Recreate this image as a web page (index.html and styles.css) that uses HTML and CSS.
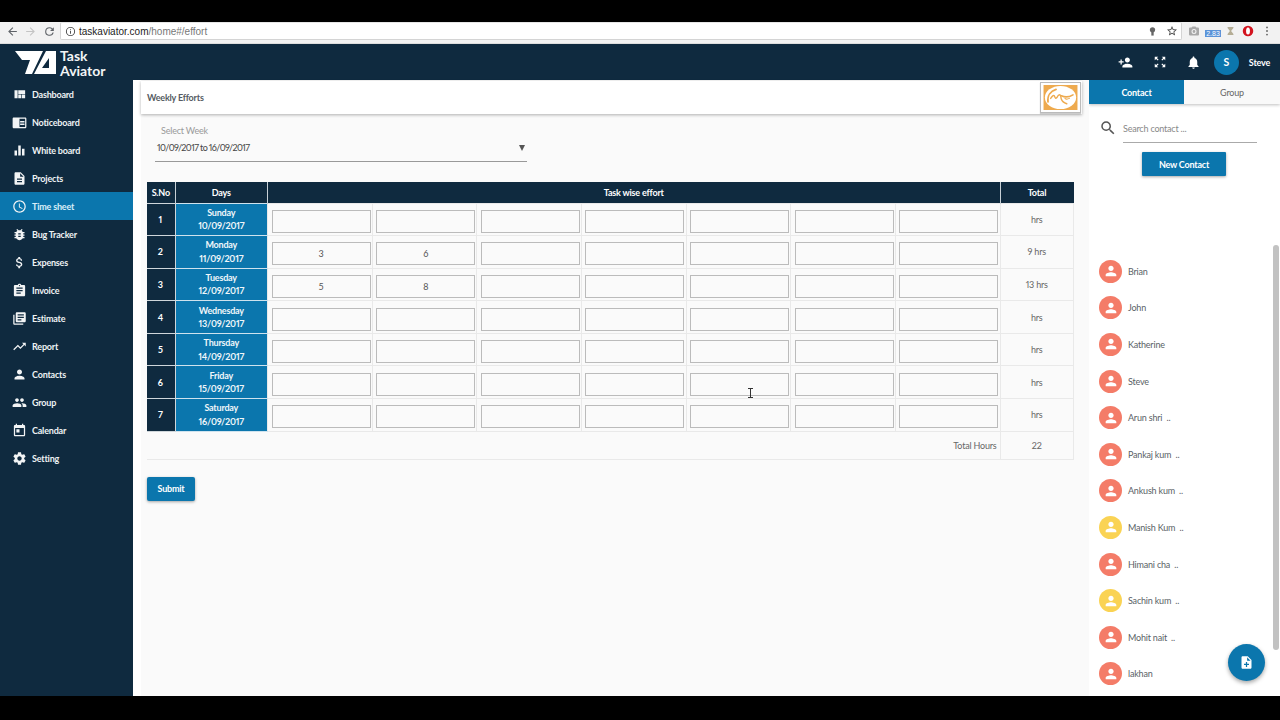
FILE: index.html
```html
<!DOCTYPE html>
<html lang="en">
<head>
<meta charset="utf-8">
<title>Task Aviator</title>
<link rel="stylesheet" href="styles.css">
</head>
<body>
<svg class="defs" aria-hidden="true">
<symbol id="i-quilt" viewBox="0 0 24 24"><path d="M10 18h5v-6h-5v6zm-6 0h5V5H4v13zm12 0h5v-6h-5v6zM10 5v6h11V5H10z"/></symbol>
<symbol id="i-reader" viewBox="0 0 24 24"><path d="M13 12h7v1.5h-7zm0-2.5h7V11h-7zm0 5h7V16h-7zM21 4H3c-1.1 0-2 .9-2 2v13c0 1.1.9 2 2 2h18c1.1 0 2-.9 2-2V6c0-1.1-.9-2-2-2zm0 15h-9V6h9v13z"/></symbol>
<symbol id="i-bars" viewBox="0 0 24 24"><path d="M10 20h4V4h-4v16zm-6 0h4v-8H4v8zM16 9v11h4V9h-4z"/></symbol>
<symbol id="i-desc" viewBox="0 0 24 24"><path d="M14 2H6c-1.1 0-1.99.9-1.99 2L4 20c0 1.1.89 2 1.99 2H18c1.1 0 2-.9 2-2V8l-6-6zm2 16H8v-2h8v2zm0-4H8v-2h8v2zm-3-5V3.5L18.5 9H13z"/></symbol>
<symbol id="i-time" viewBox="0 0 24 24"><path d="M11.99 2C6.47 2 2 6.48 2 12s4.47 10 9.99 10C17.52 22 22 17.52 22 12S17.52 2 11.99 2zM12 20c-4.42 0-8-3.58-8-8s3.58-8 8-8 8 3.58 8 8-3.58 8-8 8zm.5-13H11v6l5.25 3.15.75-1.23-4.5-2.67z"/></symbol>
<symbol id="i-bug" viewBox="0 0 24 24"><path d="M20 8h-2.81c-.45-.78-1.07-1.45-1.82-1.96L17 4.41 15.59 3l-2.17 2.17C12.96 5.06 12.49 5 12 5c-.49 0-.96.06-1.41.17L8.41 3 7 4.41l1.62 1.63C7.88 6.55 7.26 7.22 6.81 8H4v2h2.09c-.05.33-.09.66-.09 1v1H4v2h2v1c0 .34.04.67.09 1H4v2h2.81c1.04 1.79 2.97 3 5.19 3s4.15-1.21 5.19-3H20v-2h-2.09c.05-.33.09-.66.09-1v-1h2v-2h-2v-1c0-.34-.04-.67-.09-1H20V8zm-6 8h-4v-2h4v2zm0-4h-4v-2h4v2z"/></symbol>
<symbol id="i-money" viewBox="0 0 24 24"><path d="M11.8 10.9c-2.27-.59-3-1.2-3-2.15 0-1.09 1.01-1.85 2.7-1.85 1.78 0 2.44.85 2.5 2.1h2.21c-.07-1.72-1.12-3.3-3.21-3.81V3h-3v2.16c-1.94.42-3.5 1.68-3.5 3.61 0 2.31 1.91 3.46 4.7 4.13 2.5.6 3 1.48 3 2.41 0 .69-.49 1.79-2.7 1.79-2.06 0-2.87-.92-2.98-2.1h-2.2c.12 2.19 1.76 3.42 3.68 3.83V21h3v-2.15c1.95-.37 3.5-1.5 3.5-3.55 0-2.84-2.43-3.81-4.7-4.4z"/></symbol>
<symbol id="i-assign" viewBox="0 0 24 24"><path d="M19 3h-4.18C14.4 1.84 13.3 1 12 1c-1.3 0-2.4.84-2.82 2H5c-1.1 0-2 .9-2 2v14c0 1.1.9 2 2 2h14c1.1 0 2-.9 2-2V5c0-1.1-.9-2-2-2zm-7 0c.55 0 1 .45 1 1s-.45 1-1 1-1-.45-1-1 .45-1 1-1zm2 14H7v-2h7v2zm3-4H7v-2h10v2zm0-4H7V7h10v2z"/></symbol>
<symbol id="i-books" viewBox="0 0 24 24"><path d="M4 6H2v14c0 1.1.9 2 2 2h14v-2H4V6zm16-4H8c-1.1 0-2 .9-2 2v12c0 1.1.9 2 2 2h12c1.1 0 2-.9 2-2V4c0-1.1-.9-2-2-2zm-1 9H9V9h10v2zm-4 4H9v-2h6v2zm4-8H9V5h10v2z"/></symbol>
<symbol id="i-trend" viewBox="0 0 24 24"><path d="M16 6l2.29 2.29-4.88 4.88-4-4L2 16.59 3.41 18l6-6 4 4 6.3-6.29L22 12V6z"/></symbol>
<symbol id="i-person" viewBox="0 0 24 24"><path d="M12 12c2.21 0 4-1.79 4-4s-1.79-4-4-4-4 1.79-4 4 1.79 4 4 4zm0 2c-2.67 0-8 1.34-8 4v2h16v-2c0-2.66-5.33-4-8-4z"/></symbol>
<symbol id="i-group" viewBox="0 0 24 24"><path d="M16 11c1.66 0 2.99-1.34 2.99-3S17.66 5 16 5c-1.66 0-3 1.34-3 3s1.34 3 3 3zm-8 0c1.66 0 2.99-1.34 2.99-3S9.66 5 8 5C6.34 5 5 6.34 5 8s1.34 3 3 3zm0 2c-2.33 0-7 1.17-7 3.5V19h14v-2.5c0-2.33-4.67-3.5-7-3.5zm8 0c-.29 0-.62.02-.97.05 1.16.84 1.97 1.97 1.97 3.45V19h6v-2.5c0-2.33-4.67-3.5-7-3.5z"/></symbol>
<symbol id="i-today" viewBox="0 0 24 24"><path d="M19 3h-1V1h-2v2H8V1H6v2H5c-1.11 0-1.99.9-1.99 2L3 19c0 1.1.89 2 2 2h14c1.1 0 2-.9 2-2V5c0-1.1-.9-2-2-2zm0 16H5V8h14v11zM7 10h5v5H7z"/></symbol>
<symbol id="i-gear" viewBox="0 0 24 24"><path d="M19.43 12.98c.04-.32.07-.64.07-.98s-.03-.66-.07-.98l2.11-1.65c.19-.15.24-.42.12-.64l-2-3.46c-.12-.22-.39-.3-.61-.22l-2.49 1c-.52-.4-1.08-.73-1.69-.98l-.38-2.65C14.46 2.18 14.25 2 14 2h-4c-.25 0-.46.18-.49.42l-.38 2.65c-.61.25-1.17.59-1.69.98l-2.49-1c-.23-.09-.49 0-.61.22l-2 3.46c-.13.22-.07.49.12.64l2.11 1.65c-.04.32-.07.65-.07.98s.03.66.07.98l-2.11 1.65c-.19.15-.24.42-.12.64l2 3.46c.12.22.39.3.61.22l2.49-1c.52.4 1.08.73 1.69.98l.38 2.65c.03.24.24.42.49.42h4c.25 0 .46-.18.49-.42l.38-2.65c.61-.25 1.17-.59 1.69-.98l2.49 1c.23.09.49 0 .61-.22l2-3.46c.12-.22.07-.49-.12-.64l-2.11-1.65zM12 15.5c-1.93 0-3.5-1.57-3.5-3.5s1.57-3.5 3.5-3.5 3.5 1.57 3.5 3.5-1.57 3.5-3.5 3.5z"/></symbol>
<symbol id="i-padd" viewBox="0 0 24 24"><path d="M15 12c2.21 0 4-1.79 4-4s-1.79-4-4-4-4 1.79-4 4 1.79 4 4 4zm-9-2V7H4v3H1v2h3v3h2v-3h3v-2H6zm9 4c-2.67 0-8 1.34-8 4v2h16v-2c0-2.66-5.33-4-8-4z"/></symbol>
<symbol id="i-map" viewBox="0 0 24 24"><path d="M15 3l2.3 2.3-2.89 2.87 1.42 1.42L18.7 6.7 21 9V3zM3 9l2.3-2.3 2.87 2.89 1.42-1.42L6.7 5.3 9 3H3zm6 12l-2.3-2.3 2.89-2.87-1.42-1.42L5.3 17.3 3 15v6zm12-6l-2.3 2.3-2.87-2.89-1.42 1.42 2.89 2.87L15 21h6z"/></symbol>
<symbol id="i-bell" viewBox="0 0 24 24"><path d="M12 22c1.1 0 2-.9 2-2h-4c0 1.1.89 2 2 2zm6-6v-5c0-3.07-1.64-5.64-4.5-6.32V4c0-.83-.67-1.5-1.5-1.5s-1.5.67-1.5 1.5v.68C7.63 5.36 6 7.92 6 11v5l-2 2v1h16v-1l-2-2z"/></symbol>
<symbol id="i-search" viewBox="0 0 24 24"><path d="M15.5 14h-.79l-.28-.27A6.47 6.47 0 0 0 16 9.5 6.5 6.5 0 1 0 9.5 16c1.61 0 3.09-.59 4.23-1.57l.27.28v.79l5 4.99L20.49 19l-4.99-5zm-6 0C7.01 14 5 11.99 5 9.5S7.01 5 9.5 5 14 7.01 14 9.5 11.99 14 9.5 14z"/></symbol>
<symbol id="i-note" viewBox="0 0 24 24"><path d="M14 2H6c-1.1 0-1.99.9-1.99 2L4 20c0 1.1.89 2 1.99 2H18c1.1 0 2-.9 2-2V8l-6-6zm2 14h-3v3h-2v-3H8v-2h3v-3h2v3h3v2zm-3-7V3.5L18.5 9H13z"/></symbol>
</svg>

<div class="bar-black"></div>
<div class="chrome">
  <svg class="c-ico" viewBox="0 0 24 24"><path d="M20 11H7.83l5.59-5.59L12 4l-8 8 8 8 1.41-1.41L7.83 13H20v-2z"/></svg>
  <svg class="c-ico dim" viewBox="0 0 24 24"><path d="M12 4l-1.41 1.41L16.17 11H4v2h12.17l-5.58 5.59L12 20l8-8z"/></svg>
  <svg class="c-ico reload" viewBox="0 0 24 24"><path d="M17.65 6.35A7.96 7.96 0 0 0 12 4a8 8 0 1 0 7.73 10h-2.08A6 6 0 1 1 12 6c1.66 0 3.14.69 4.22 1.78L13 11h7V4l-2.35 2.35z"/></svg>
  <div class="omni">
    <svg class="omni-info" viewBox="0 0 24 24"><path d="M11 7h2v2h-2zm0 4h2v6h-2zm1-9a10 10 0 1 0 0 20 10 10 0 0 0 0-20zm0 18a8 8 0 1 1 0-16 8 8 0 0 1 0 16z"/></svg>
    <span class="url">taskaviator.com<span class="url-path">/home#/effort</span></span>
    <svg class="omni-key" viewBox="0 0 12 14"><circle cx="6" cy="4" r="4.500"/><rect x="4" y="5" width="4" height="9"/></svg>
    <svg class="omni-star" viewBox="0 0 24 24"><path d="M22 9.240l-7.190-.620L12 2 9.190 8.630 2 9.240l5.460 4.730L5.820 21 12 17.270 18.180 21l-1.630-7.030L22 9.240zM12 15.400l-3.760 2.270 1-4.280-3.320-2.880 4.380-.380L12 6.100l1.710 4.040 4.380.380-3.320 2.880 1 4.280L12 15.400z"/></svg>
  </div>
  <div class="ext">
    <svg class="ext-cam" viewBox="0 0 24 24"><path d="M9 3L7.200 5H4a2 2 0 0 0-2 2v12a2 2 0 0 0 2 2h16a2 2 0 0 0 2-2V7a2 2 0 0 0-2-2h-3.200L15 3H9zm3 15a5 5 0 1 1 0-10 5 5 0 0 1 0 10zm0-2.200a2.800 2.800 0 1 0 0-5.600 2.800 2.800 0 0 0 0 5.600z"/></svg>
    <span class="ext-badge">2.83</span>
    <svg class="ext-glass" viewBox="0 0 12 16"><path d="M1 1h10v2L7 8l4 5v2H1v-2l4-5-4-5z"/></svg>
    <svg class="ext-opera" viewBox="0 0 16 16"><circle cx="8" cy="8" r="7"/><ellipse class="op-hole" cx="8" cy="8" rx="2.600" ry="4.800"/></svg>
    <svg class="ext-dots" viewBox="0 0 4 14"><circle cx="2" cy="2" r="1.300"/><circle cx="2" cy="7" r="1.300"/><circle cx="2" cy="12" r="1.300"/></svg>
  </div>
</div>

<header class="topbar">
  <div class="brand">
    <svg class="brand-mark" viewBox="0 0 41 24"><path d="M0 1H28L17 24H10L15 10H7Z"/><path fill-rule="evenodd" d="M31 1H41V24H19ZM34 8L27 18H34Z"/></svg>
    <div class="brand-name">Task<br>Aviator</div>
  </div>
  <div class="top-actions">
    <svg class="top-ico padd"><use href="#i-padd"/></svg>
    <svg class="top-ico fmap"><use href="#i-map"/></svg>
    <svg class="top-ico bell"><use href="#i-bell"/></svg>
    <div class="user-avatar">S</div>
    <span class="user-name">Steve</span>
  </div>
</header>

<div class="app">
  <nav class="sidebar">
    <a class="nav-item"><svg><use href="#i-quilt"/></svg>Dashboard</a>
    <a class="nav-item"><svg><use href="#i-reader"/></svg>Noticeboard</a>
    <a class="nav-item"><svg><use href="#i-bars"/></svg>White board</a>
    <a class="nav-item"><svg><use href="#i-desc"/></svg>Projects</a>
    <a class="nav-item active"><svg><use href="#i-time"/></svg>Time sheet</a>
    <a class="nav-item"><svg><use href="#i-bug"/></svg>Bug Tracker</a>
    <a class="nav-item"><svg><use href="#i-money"/></svg>Expenses</a>
    <a class="nav-item"><svg><use href="#i-assign"/></svg>Invoice</a>
    <a class="nav-item"><svg><use href="#i-books"/></svg>Estimate</a>
    <a class="nav-item"><svg><use href="#i-trend"/></svg>Report</a>
    <a class="nav-item"><svg><use href="#i-person"/></svg>Contacts</a>
    <a class="nav-item"><svg><use href="#i-group"/></svg>Group</a>
    <a class="nav-item"><svg><use href="#i-today"/></svg>Calendar</a>
    <a class="nav-item"><svg><use href="#i-gear"/></svg>Setting</a>
  </nav>

  <main class="content">
    <div class="title-card">
      <span class="title-text">Weekly Efforts</span>
      <div class="org-logo">
        <svg viewBox="0 0 38 28"><rect width="38" height="28" fill="#eeaa4e"/><ellipse cx="19" cy="14" rx="17.500" ry="13" fill="#fff"/><g fill="none" stroke="#eeaa4e" stroke-linecap="round"><path stroke-width="2" d="M5 19C4 12 8 7 14 5"/><path stroke-width="1.600" d="M8 15c2-3 3-4 4-3 1 2 1 4 3 2 1-2 2-3 3-3 2 0 1 3 2 5 1 3 3 4 6 5"/><path stroke-width="1.800" d="M20 12c4 2 8 2 13-1"/><path stroke-width="1.200" d="M24 15c1 1 3 1 5 0"/></g></svg>
      </div>
    </div>

    <div class="week-select">
      <label>Select Week</label>
      <div class="select-value"><span>10/09/2017 to 16/09/2017</span><i class="caret"></i></div>
    </div>

    <table class="sheet">
      <colgroup>
        <col class="c-no"><col class="c-day"><col><col><col><col><col><col><col><col class="c-total">
      </colgroup>
      <thead>
        <tr><th>S.No</th><th>Days</th><th colspan="7">Task wise effort</th><th>Total</th></tr>
      </thead>
      <tbody>
        <tr><td class="no">1</td><td class="day">Sunday<br>10/09/2017</td><td><input></td><td><input></td><td><input></td><td><input></td><td><input></td><td><input></td><td><input></td><td class="tot">hrs</td></tr>
        <tr><td class="no">2</td><td class="day">Monday<br>11/09/2017</td><td><input value="3"></td><td><input value="6"></td><td><input></td><td><input></td><td><input></td><td><input></td><td><input></td><td class="tot">9 hrs</td></tr>
        <tr><td class="no">3</td><td class="day">Tuesday<br>12/09/2017</td><td><input value="5"></td><td><input value="8"></td><td><input></td><td><input></td><td><input></td><td><input></td><td><input></td><td class="tot">13 hrs</td></tr>
        <tr><td class="no">4</td><td class="day">Wednesday<br>13/09/2017</td><td><input></td><td><input></td><td><input></td><td><input></td><td><input></td><td><input></td><td><input></td><td class="tot">hrs</td></tr>
        <tr><td class="no">5</td><td class="day">Thursday<br>14/09/2017</td><td><input></td><td><input></td><td><input></td><td><input></td><td><input></td><td><input></td><td><input></td><td class="tot">hrs</td></tr>
        <tr><td class="no">6</td><td class="day">Friday<br>15/09/2017</td><td><input></td><td><input></td><td><input></td><td><input></td><td><input></td><td><input></td><td><input></td><td class="tot">hrs</td></tr>
        <tr><td class="no">7</td><td class="day">Saturday<br>16/09/2017</td><td><input></td><td><input></td><td><input></td><td><input></td><td><input></td><td><input></td><td><input></td><td class="tot">hrs</td></tr>
        <tr class="sum"><td colspan="9" class="sum-label">Total Hours</td><td class="tot">22</td></tr>
      </tbody>
    </table>

    <button class="submit">Submit</button>
  </main>

  <aside class="panel">
    <div class="tabs"><div class="tab on">Contact</div><div class="tab">Group</div></div>
    <div class="search">
      <svg><use href="#i-search"/></svg>
      <span>Search contact ...</span>
    </div>
    <button class="new-contact">New Contact</button>
    <ul class="contacts">
      <li><span class="av"><svg><use href="#i-person"/></svg></span>Brian</li>
      <li><span class="av"><svg><use href="#i-person"/></svg></span>John</li>
      <li><span class="av"><svg><use href="#i-person"/></svg></span>Katherine</li>
      <li><span class="av"><svg><use href="#i-person"/></svg></span>Steve</li>
      <li><span class="av"><svg><use href="#i-person"/></svg></span>Arun shri&nbsp;&nbsp;..</li>
      <li><span class="av"><svg><use href="#i-person"/></svg></span>Pankaj kum&nbsp;&nbsp;..</li>
      <li><span class="av"><svg><use href="#i-person"/></svg></span>Ankush kum&nbsp;&nbsp;..</li>
      <li><span class="av y"><svg><use href="#i-person"/></svg></span>Manish Kum&nbsp;&nbsp;..</li>
      <li><span class="av"><svg><use href="#i-person"/></svg></span>Himani cha&nbsp;&nbsp;..</li>
      <li><span class="av y"><svg><use href="#i-person"/></svg></span>Sachin kum&nbsp;&nbsp;..</li>
      <li><span class="av"><svg><use href="#i-person"/></svg></span>Mohit nait&nbsp;&nbsp;..</li>
      <li><span class="av"><svg><use href="#i-person"/></svg></span>lakhan</li>
    </ul>
    <div class="scroll-thumb"></div>
    <button class="fab" aria-label="Add"><svg><use href="#i-note"/></svg></button>
  </aside>
</div>
<div class="bar-bottom"></div>
<span class="ibeam"></span>
</body>
</html>
```
FILE: styles.css
```css
* { box-sizing: border-box; }
html, body { margin: 0; padding: 0; height: 720px; overflow: hidden; }
body { position: relative; display: flex; flex-direction: column; background: #000; font-family: "Lato", "Liberation Sans", sans-serif; font-size: 9px; letter-spacing: -.2px; font-variant-numeric: proportional-nums; color: #555; }
.defs { display: none; }

.bar-black { height: 22px; flex: none; background: #000; }
.bar-bottom { height: 24px; flex: none; background: #000; }

/* browser chrome */
.chrome { height: 22px; flex: none; display: flex; align-items: flex-start; background: #f2f2f2; padding: 0 0 0 6px; border-bottom: 1px solid #ddd; }
.c-ico { width: 13px; height: 13px; fill: #5f6368; margin: 3px 0 0; flex: none; }
.c-ico.dim { fill: #c4c4c4; margin-left: 5px; }
.c-ico.reload { margin-left: 6px; margin-right: 4px; }
.omni { width: 1122px; height: 18px; flex: none; display: flex; align-items: center; background: #fff; border: 1px solid #d4d4d4; border-top-color: #e6e6e6; border-radius: 2px; padding: 0 3px 0 4px; }
.omni-info { width: 11px; height: 11px; fill: #444; flex: none; }
.url { margin-left: 3px; font: 10px "Liberation Sans", sans-serif; letter-spacing: 0; color: #222; flex: 1; }
.url-path { color: #777; }
.omni-key { width: 7px; height: 9px; fill: #666; flex: none; margin-right: 10px; }
.omni-star { width: 12px; height: 12px; fill: #444; flex: none; }
.ext { flex: 1; display: flex; align-items: center; height: 18px; padding-left: 6px; }
.ext-cam { width: 12px; height: 12px; fill: #a8a8a8; flex: none; }
.ext-badge { margin: 5px 0 0 5px; width: 16px; height: 7px; background: #5b93d8; color: #fff; font: 7px/7px "Liberation Sans", sans-serif; letter-spacing: 0; text-align: center; flex: none; }
.ext-glass { width: 7px; height: 10px; margin-left: 6px; fill: #b5ad95; flex: none; }
.ext-opera { width: 12px; height: 12px; margin-left: 8px; fill: #d3141f; flex: none; }
.op-hole { fill: #fff; }
.ext-dots { width: 4px; height: 10px; margin-left: 11px; fill: #666; flex: none; }

/* top bar */
.topbar { height: 36px; flex: none; display: flex; align-items: center; justify-content: space-between; background: #0f2a3f; color: #fff; }
.brand { display: flex; align-items: center; padding-left: 15px; margin-top: 2px; }
.brand-mark { width: 41px; height: 24px; fill: #fff; flex: none; margin-top: -2px; }
.brand-name { margin-left: 4px; font-weight: 700; font-size: 14px; line-height: 15px; letter-spacing: 0; color: #f3f5f6; }
.top-actions { display: flex; align-items: center; padding-right: 10px; }
.top-ico { width: 15px; height: 15px; fill: #fff; flex: none; }
.padd { margin-right: 20px; }
.fmap { margin-right: 19px; width: 14px; height: 14px; }
.bell { margin-right: 13px; }
.user-avatar { width: 25px; height: 25px; border-radius: 50%; background: #0b76ad; color: #fff; font-weight: 700; font-size: 10.5px; line-height: 25px; text-align: center; margin-right: 10px; }
.user-name { font-size: 9px; font-weight: 700; }

/* main layout */
.app { flex: 1; min-height: 0; display: flex; background: #fafafa; }
.sidebar { width: 133px; flex: none; background: #0f2a3f; }
.nav-item { height: 28px; display: flex; align-items: center; padding-left: 12px; color: #eef2f4; font-weight: 700; }
.nav-item svg { width: 15px; height: 15px; fill: #f2f4f5; margin-right: 5px; flex: none; }
.nav-item.active { background: #0b76ad; color: #d8eef8; }

.content { flex: 1; min-width: 0; padding: 1px 7px 0 8px; background: linear-gradient(to right, #fff 8px, #fafafa 8px); }
.title-card { height: 33px; display: flex; align-items: center; justify-content: space-between; padding: 0 1px 0 6px; background: #fff; box-shadow: 0 1px 3px rgba(0, 0, 0, .3); font-weight: 700; color: #555b62; }
.title-text { margin-top: -1px; }
.org-logo { width: 41px; height: 31px; padding: 2px; background: #fff; border: 1px solid #bbb; box-shadow: 0 1px 1px rgba(0, 0, 0, .2); }
.org-logo svg { display: block; width: 100%; height: 100%; }

.week-select { width: 372px; margin: 11px 0 0 14px; border-bottom: 1px solid #999; height: 37px; }
.week-select label { display: block; padding-left: 6px; line-height: 12px; color: #999; }
.select-value { display: flex; justify-content: space-between; align-items: center; margin-top: 5px; padding: 0 1px 0 2px; color: #444; letter-spacing: -.6px; }
.caret { width: 0; height: 0; border-left: 3px solid transparent; border-right: 3px solid transparent; border-top: 6px solid #555; margin-right: 1px; }

.sheet { margin: 20px 0 0 6px; width: 927px; table-layout: fixed; border-collapse: collapse; }
.c-no { width: 28px; }
.c-day { width: 92.500px; }
.c-total { width: 73.500px; }
.sheet th { height: 21px; padding: 0; background: #0f2a3f; color: #fff; font-weight: 700; border-left: 1px solid #c7d0d6; }
.sheet th:first-child { border-left: 0; }
.sheet td { height: 32.600px; padding: 0; text-align: center; border: 1px solid #e9e9e9; }
.sheet input { display: block; width: 99px; height: 23px; margin: 4px 0 0 3.500px; padding: 0; background: #fafafa; border: 1px solid #bbb; font: 9px "Lato", sans-serif; letter-spacing: -.2px; color: #555; text-align: center; outline: 0; }
.sheet td.no { background: #0f2a3f; color: #fff; font-weight: 700; border: 1px solid #cfd6da; border-left: 0; padding-right: 1px; }
.sheet td.day { background: #0b76ad; color: #f0f6fa; font-weight: 700; line-height: 13.500px; border: 1px solid #cfe3ee; border-width: 1px 0; }
.sheet td.tot { color: #666; }
.sheet .sum td { height: 28px; border-width: 0 0 1px; }
.sheet .sum td.tot { border-width: 1px; }
.sheet td.sum-label { text-align: right; padding-right: 3px; color: #666; }

.submit { display: block; margin: 17px 0 0 6px; width: 48px; height: 24px; padding: 0; border: 0; border-radius: 2px; background: #0b76ad; color: #fff; font: 700 9px "Lato", sans-serif; letter-spacing: -.2px; box-shadow: 0 1px 3px rgba(0, 0, 0, .35); }

/* right panel */
.panel { position: relative; width: 191px; flex: none; background: #fff; overflow: hidden; }
.tabs { display: flex; height: 24px; box-shadow: 0 1px 3px rgba(0, 0, 0, .25); }
.tab { flex: 1; display: flex; align-items: center; justify-content: center; background: #f9f9f9; color: #666; }
.tab.on { flex: none; width: 95px; background: #0b76ad; color: #fff; font-weight: 700; }
.search { display: flex; align-items: center; height: 39px; margin-left: 10px; width: 158px; }
.search svg { width: 18px; height: 18px; fill: #555; flex: none; margin-right: 6px; margin-top: 9px; }
.search span { flex: 1; color: #888; border-bottom: 1px solid #aaa; height: 28px; line-height: 27px; margin-top: 11px; }
.new-contact { display: block; margin: 9px 0 0 53px; width: 84px; height: 24px; padding: 0; border: 0; border-radius: 1px; background: #0b76ad; color: #fff; font: 700 9px "Lato", sans-serif; letter-spacing: -.2px; box-shadow: 0 1px 3px rgba(0, 0, 0, .35); }
.contacts { list-style: none; margin: 77px 0 0; padding: 0; }
.contacts li { height: 36.600px; display: flex; align-items: center; padding-left: 10px; color: #5a5f66; }
.av { width: 23px; height: 23px; border-radius: 50%; background: #f47c68; display: flex; align-items: center; justify-content: center; margin-right: 6px; flex: none; }
.av.y { background: #fad354; }
.av svg { width: 16px; height: 16px; fill: #fff; }
.scroll-thumb { position: absolute; right: 1px; top: 165px; width: 6px; height: 405px; border-radius: 3px; background: #c2c2c2; }
.fab { position: absolute; left: 139px; top: 564px; width: 37px; height: 37px; border: 0; border-radius: 50%; background: #0b76ad; padding: 0; display: flex; align-items: center; justify-content: center; box-shadow: 0 2px 4px rgba(0, 0, 0, .35); }
.fab svg { width: 15px; height: 15px; fill: #fff; }

/* text cursor over the table */
.ibeam { position: absolute; left: 749.500px; top: 388px; width: 1px; height: 10px; background: #333; }
.ibeam::before, .ibeam::after { content: ""; position: absolute; left: -2px; width: 5px; height: 1px; background: #333; }
.ibeam::before { top: 0; }
.ibeam::after { bottom: 0; }
```
